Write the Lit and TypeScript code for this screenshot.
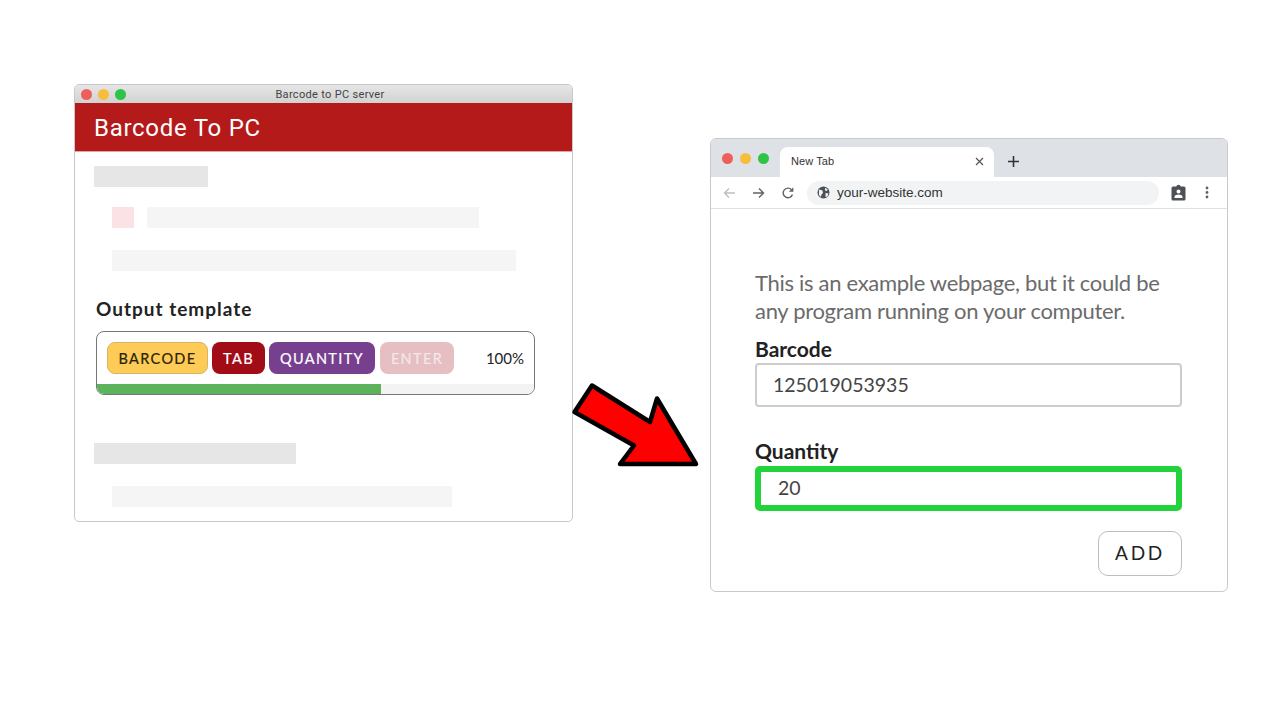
import { LitElement, html, css } from "lit";
import { customElement } from "lit/decorators.js";

@customElement("app-root")
export class AppRoot extends LitElement {
  static styles = css`
    :host { display: block; width: 1280px; height: 720px; position: relative; background: #fff; overflow: hidden; font-family: "Lato", sans-serif; }
    .win { position: absolute; box-sizing: border-box; background: #fff; border: 1px solid #c9c9c9; overflow: hidden; display: flex; flex-direction: column; }
    .left { left: 74px; top: 84px; width: 499px; height: 438px; border-radius: 5px; }
    .titlebar { height: 18px; flex: none; position: relative; background: linear-gradient(#e6e6e6, #d2d2d2); display: flex; align-items: center; justify-content: center; font: 11px "Roboto", sans-serif; color: #444; letter-spacing: 0.32px; padding-left: 13px; }
    .lights { position: absolute; left: 6px; top: 4px; display: flex; gap: 6px; }
    .lights i { display: block; width: 11px; height: 11px; border-radius: 50%; }
    .r { background: #ee5f5b; } .y { background: #f9bd3e; } .g { background: #2fc348; }
    .appbar { height: 49px; flex: none; box-sizing: border-box; background: #b41a1a; color: #fff; font: 400 24px "Roboto", sans-serif; letter-spacing: 0.72px; padding: 2px 0 0 19px; display: flex; align-items: center; border-bottom: 1px solid #e2a6a6; }
    .lbody { flex: 1; padding: 14px 0 0 19px; display: flex; flex-direction: column; align-items: flex-start; }
    .sk { height: 21px; flex: none; }
    .sk.d { background: #e6e6e6; }
    .sk.l { background: #f5f5f5; }
    .row1 { display: flex; gap: 13px; margin: 20px 0 0 18px; }
    .pink { width: 22px; background: #fbe3e5; }
    .h { font: 700 19px "Lato", sans-serif; color: #222; letter-spacing: 1px; margin: 27px 0 0 2px; line-height: 22px; }
    .tmpl { box-sizing: border-box; width: 439px; height: 64px; margin: 11px 0 0 2px; border: 1px solid #777; border-radius: 8px; overflow: hidden; display: flex; flex-direction: column; }
    .chips { flex: 1; display: flex; align-items: center; gap: 4px; padding: 0 10px; font-size: 14.5px; letter-spacing: 1.35px; font-weight: 400; -webkit-text-stroke: 0.2px currentColor; }
    .chip { box-sizing: border-box; height: 32px; border-radius: 8px; display: flex; align-items: center; justify-content: center; }
    .c1 { width: 101px; background: #fecb57; border: 1px solid #d8b468; color: #2a2108; }
    .c2 { width: 53px; background: #a10c17; color: #fff; }
    .c3 { width: 106px; background: #77408f; color: #fff; margin-right: 1px; }
    .c4 { width: 74px; background: #e6bfc3; color: #f5e6e8; }
    .pct { margin-left: auto; font: 400 15px "Lato", sans-serif; letter-spacing: 0; color: #222; -webkit-text-stroke: 0; }
    .bar { height: 10px; flex: none; background: #f3f3f3; }
    .bar div { height: 100%; background: #5cb35c; }
    .right { left: 710px; top: 138px; width: 518px; height: 454px; border-radius: 6px; }
    .tabs { height: 38px; flex: none; background: #dee1e6; display: flex; align-items: flex-end; position: relative; }
    .tabs .lights { left: 11px; top: 14px; gap: 7px; }
    .tab { margin-left: 69px; width: 214px; height: 30px; box-sizing: border-box; background: #fff; border-radius: 8px 8px 0 0; display: flex; align-items: center; justify-content: space-between; padding: 0 10px 2px 11px; font: 11px "Liberation Sans", sans-serif; color: #333; letter-spacing: 0.1px; }
    .plus { margin: 0 0 9px 13px; display: block; }
    .tools { height: 32px; flex: none; box-sizing: border-box; background: #fff; border-bottom: 1px solid #e1e1e1; display: flex; align-items: center; padding: 0 12px 0 11px; }
    .tools svg { display: block; flex: none; }
    .omni { box-sizing: border-box; margin-left: 12px; width: 352px; height: 24px; border-radius: 12px; background: #f1f3f4; display: flex; align-items: center; gap: 7px; padding-left: 10px; font: 13.5px "Liberation Sans", sans-serif; color: #333; flex: none; }
    .rbody { flex: 1; padding: 60px 45px 0 44px; display: flex; flex-direction: column; }
    .p { font: 400 22px/28px "Lato", sans-serif; letter-spacing: -0.3px; color: #6b6b6b; margin: 0; white-space: nowrap; }
    .lab { font: 700 21px/26px "Lato", sans-serif; color: #222; }
    .inp { box-sizing: border-box; height: 44px; border: 2px solid #cdcdcd; border-radius: 4px; padding: 0 0 2px 16px; display: flex; align-items: center; font: 400 19.5px "Lato", sans-serif; color: #444; margin-top: 1px; }
    .inp.on { height: 45px; border: 6px solid #23d33b; padding: 0 0 2px 17px; border-radius: 5px; margin-top: 2px; }
    .add { align-self: flex-end; box-sizing: border-box; width: 84px; height: 45px; border: 1px solid #bdbdbd; border-radius: 10px; margin-top: 20px; padding-bottom: 2px; display: flex; align-items: center; justify-content: center; font: 400 19px "Lato", sans-serif; letter-spacing: 2.7px; color: #222; }
    .arrow { position: absolute; left: 570px; top: 380px; }
  `;

  render() {
    return html`
      <div class="win left">
        <div class="titlebar">
          <div class="lights"><i class="r"></i><i class="y"></i><i class="g"></i></div>
          Barcode to PC server
        </div>
        <div class="appbar">Barcode To PC</div>
        <div class="lbody">
          <div class="sk d" style="width:114px"></div>
          <div class="row1"><div class="sk pink"></div><div class="sk l" style="width:332px"></div></div>
          <div class="sk l" style="width:404px;margin:22px 0 0 18px"></div>
          <div class="h">Output template</div>
          <div class="tmpl">
            <div class="chips">
              <div class="chip c1">BARCODE</div>
              <div class="chip c2">TAB</div>
              <div class="chip c3">QUANTITY</div>
              <div class="chip c4">ENTER</div>
              <div class="pct">100%</div>
            </div>
            <div class="bar"><div style="width:65%"></div></div>
          </div>
          <div class="sk d" style="width:202px;margin-top:48px"></div>
          <div class="sk l" style="width:340px;margin:22px 0 0 18px"></div>
        </div>
      </div>

      <svg class="arrow" width="132" height="90" viewBox="0 0 132 90">
        <path d="M22 5.5 L80 42 L87 18.5 L126 84 L50 84 L64 65.5 L4.5 32 Z" fill="#fe0000" stroke="#000" stroke-width="4.5" stroke-linejoin="round"/>
      </svg>

      <div class="win right">
        <div class="tabs">
          <div class="lights"><i class="r"></i><i class="y"></i><i class="g"></i></div>
          <div class="tab">New Tab
            <svg width="9" height="9" viewBox="0 0 9 9"><path d="M1 1L8 8M8 1L1 8" stroke="#555" stroke-width="1.2"/></svg>
          </div>
          <svg class="plus" width="13" height="13" viewBox="0 0 13 13"><path d="M6.5 1V12M1 6.5H12" stroke="#333" stroke-width="1.6"/></svg>
        </div>
        <div class="tools">
          <svg width="15" height="14" viewBox="0 0 15 14"><path d="M13 7H2.5M7 2.5L2.5 7L7 11.5" fill="none" stroke="#bcbfc3" stroke-width="1.4"/></svg>
          <svg style="margin-left:14px" width="15" height="14" viewBox="0 0 15 14"><path d="M2 7H12.5M8 2.5L12.5 7L8 11.5" fill="none" stroke="#5f6368" stroke-width="1.4"/></svg>
          <svg style="margin-left:15px" width="14" height="14" viewBox="0 0 14 14"><path d="M11.5 8.5A4.8 4.8 0 1 1 10.4 3.6" fill="none" stroke="#5f6368" stroke-width="1.4"/><path d="M12.4 1.2V5.8H7.8Z" fill="#5f6368"/></svg>
          <div class="omni">
            <svg width="13" height="13" viewBox="0 0 13 13"><circle cx="6.5" cy="6.5" r="6" fill="#4d5156"/><path d="M2 3.5L5.5 4.5L6 7L4.5 8.5L4 11L2 9ZM8 2L10.5 3L10 5L8 4.5ZM8.5 7L11.5 7.5L10.5 10.5L8.5 11Z" fill="#f1f3f4"/></svg>
            your-website.com
          </div>
          <svg style="margin-left:12px" width="15" height="17" viewBox="0 0 15 17"><path fill-rule="evenodd" d="M2 2.5H5.2A2.4 2.4 0 0 1 9.8 2.5H13A1.5 1.5 0 0 1 14.5 4V15A1.5 1.5 0 0 1 13 16.5H2A1.5 1.5 0 0 1 .5 15V4A1.5 1.5 0 0 1 2 2.5ZM7.5 5.5A2 2 0 1 0 7.5 9.5A2 2 0 1 0 7.5 5.5ZM3.5 14H11.5V12.8C11.5 11.3 9 10.5 7.5 10.5S3.5 11.3 3.5 12.8Z" fill="#4d5156"/></svg>
          <svg style="margin-left:19px" width="4" height="13" viewBox="0 0 4 13"><circle cx="2" cy="2" r="1.4" fill="#5f6368"/><circle cx="2" cy="6.5" r="1.4" fill="#5f6368"/><circle cx="2" cy="11" r="1.4" fill="#5f6368"/></svg>
        </div>
        <div class="rbody">
          <p class="p">This is an example webpage, but it could be<br>any program running on your computer.</p>
          <div class="lab" style="margin-top:11px">Barcode</div>
          <div class="inp">125019053935</div>
          <div class="lab" style="margin-top:31px">Quantity</div>
          <div class="inp on">20</div>
          <div class="add">ADD</div>
        </div>
      </div>
    `;
  }
}
